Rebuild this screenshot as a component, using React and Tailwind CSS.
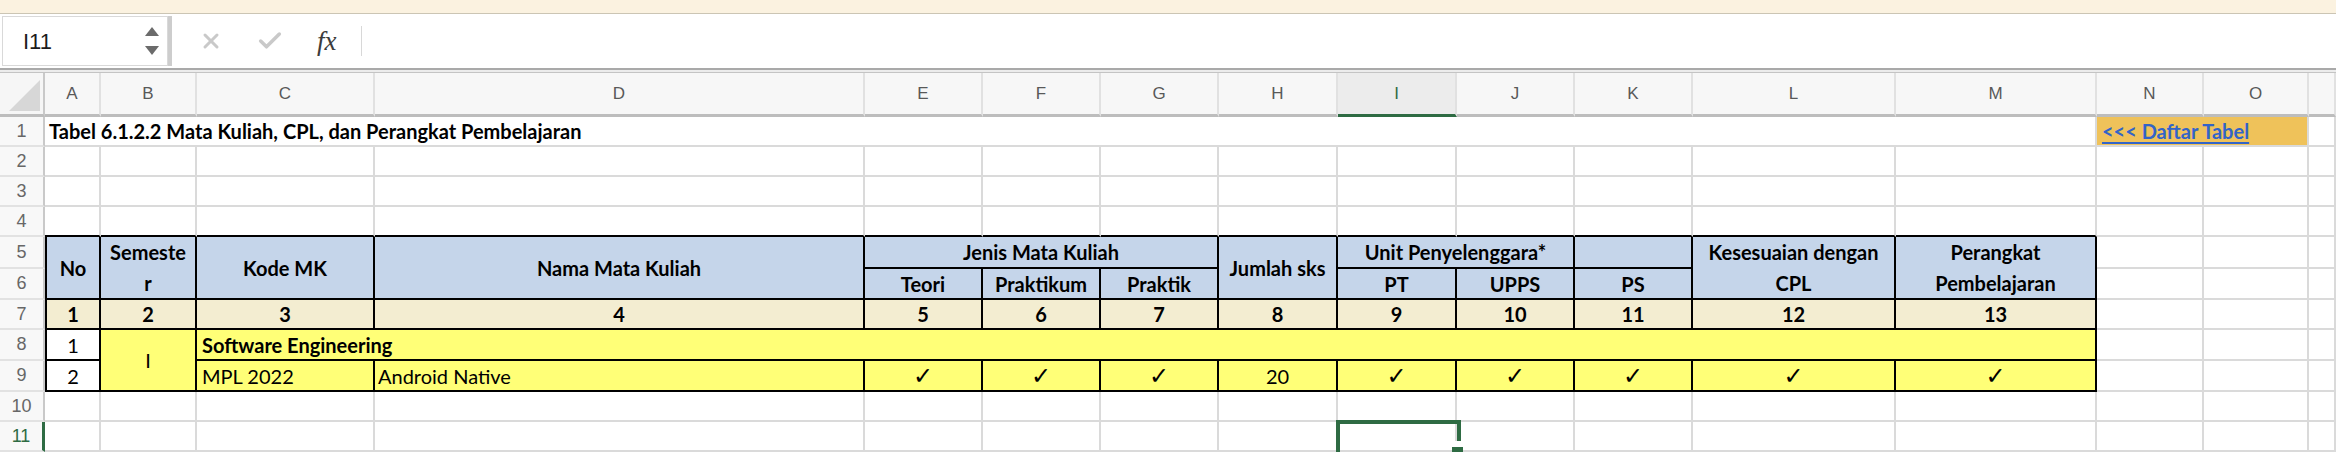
import React from "react";
import { X, Check } from "lucide-react";

const LATO = "font-['Lato','Open_Sans',sans-serif]";
const UI = "font-['Liberation_Sans','Inter',sans-serif]";
const base = "box-border border-r-2 border-b-2 flex items-center whitespace-nowrap text-[20px] text-black min-w-0";
const GRID = "border-r-[#dadada] border-b-[#dadada]";
const GRIDTOPTBL = "border-r-[#dadada] border-b-black";
const TBL = "border-r-black border-b-black";
const HEAD = `${base} ${TBL} ${LATO} bg-[#c5d5ea] justify-center font-bold`;
const NUM = `${base} ${TBL} ${LATO} bg-[#f3edd1] justify-center font-bold`;
const YEL = `${base} ${TBL} ${LATO} bg-[#ffff77]`;
const LEFT = "border-l-2 border-l-black";

function RH({ n, active }) {
  return (
    <div
      className={`box-border border-b-2 border-b-[#e2e2e2] bg-[#f8f8f8] flex items-center justify-center text-[18px] ${UI} ${
        active ? "border-r-[3px] border-r-[#2e6b43] text-[#2e6b43]" : "border-r-2 border-r-[#c9c9c9] text-[#676767]"
      }`}
    >
      {n}
    </div>
  );
}

function Blank({ cls = GRID }) {
  return <div className={`${base} ${cls}`} />;
}

function blanks(n, prefix, cls = GRID) {
  return Array.from({ length: n }, (_, i) => <Blank key={prefix + i} cls={cls} />);
}

function Two({ a, b }) {
  return (
    <>
      <span className="h-[31px] flex items-center">{a}</span>
      <span className="h-[31px] flex items-center">{b}</span>
    </>
  );
}

const Tick = () => <span className="font-['DejaVu_Sans',sans-serif] text-[24px] leading-none">✓</span>;

const COLS = ["A", "B", "C", "D", "E", "F", "G", "H", "I", "J", "K", "L", "M", "N", "O", ""];

export default function App() {
  return (
    <div className="w-[2336px] h-[452px] overflow-hidden bg-white">
      {/* top band */}
      <div className="h-[14px] bg-[#fbf2e0] border-b border-b-[#cbc5b4] box-border" />
      {/* formula bar */}
      <div className="h-[54px] flex items-stretch bg-white">
        <div className="ml-[2px] my-[2px] w-[166px] box-border border border-[#d9d9d9] flex items-center justify-between pl-[20px] pr-[8px]">
          <span className={`text-[22px] text-[#1c1c1c] ${UI}`}>I11</span>
          <div className="flex flex-col items-center gap-[10px]">
            <svg width="14" height="9" viewBox="0 0 14 9"><polygon points="7,0 14,9 0,9" fill="#6b6b6b" /></svg>
            <svg width="14" height="9" viewBox="0 0 14 9"><polygon points="0,0 14,0 7,9" fill="#6b6b6b" /></svg>
          </div>
        </div>
        <div className="w-[4px] my-[2px] bg-[#cdcdcd]" />
        <div className="flex items-center">
          <X className="ml-[27px] w-[24px] h-[24px] text-[#c9c9c9]" strokeWidth={3} />
          <Check className="ml-[33px] w-[28px] h-[28px] text-[#c9c9c9]" strokeWidth={3} />
          <span className="ml-[33px] w-[28px] text-[27px] italic text-[#3c3c3c] font-['Liberation_Serif',serif] leading-none">fx</span>
          <div className="ml-[16px] w-px h-[30px] bg-[#d8d8d8]" />
        </div>
      </div>
      <div className="h-[2px] bg-[#a9a9a9]" />
      <div className="h-[2px] bg-[#ececec]" />
      <div className="h-px bg-[#c4c4c4]" />

      {/* sheet grid */}
      <div className="grid grid-cols-[45px_56px_96px_178px_490px_118px_118px_118px_119px_119px_118px_118px_203px_201px_107px_105px_27px] grid-rows-[44px_30px_30px_30px_30px_32px_31px_30px_31px_31px_30px_30px]">
        {/* column header row */}
        <div className="box-border bg-[#f6f6f6] border-r-2 border-r-[#c9c9c9] border-b-[3px] border-b-[#bdbdbd] flex items-end justify-end pr-[3px] pb-[3px]">
          <svg width="31" height="31" viewBox="0 0 31 31"><polygon points="0,31 31,0 31,31" fill="#d7d7d7" /></svg>
        </div>
        {COLS.map((c) => (
          <div
            key={"h" + c}
            className={`box-border border-r-2 border-r-[#e1e1e1] border-b-[3px] flex items-center justify-center text-[17px] ${UI} ${
              c === "I" ? "bg-[#ececec] border-b-[#2e6b43] text-[#2e6b43]" : "bg-[#f7f7f7] border-b-[#bdbdbd] text-[#595959]"
            }`}
          >
            {c}
          </div>
        ))}

        {/* row 1 */}
        <RH n={1} />
        <div className={`${base} ${GRID} ${LATO} col-span-13 font-bold pl-[4px]`}>
          Tabel 6.1.2.2 Mata Kuliah, CPL, dan Perangkat Pembelajaran
        </div>
        <div className={`${base} ${GRID} ${LATO} col-span-2 bg-[#efc25a] pl-[5px]`}>
          <span className="font-bold text-[#3264c8] underline underline-offset-[3px] decoration-2">&lt;&lt;&lt; Daftar Tabel</span>
        </div>
        <Blank />

        {/* rows 2-3 */}
        <RH n={2} />
        {blanks(16, "r2")}
        <RH n={3} />
        {blanks(16, "r3")}

        {/* row 4 */}
        <RH n={4} />
        {blanks(13, "r4t", GRIDTOPTBL)}
        {blanks(3, "r4")}

        {/* row 5 */}
        <RH n={5} />
        <div className={`${HEAD} ${LEFT} row-span-2`}>No</div>
        <div className={`${HEAD} row-span-2 flex-col`}>
          <Two a="Semeste" b="r" />
        </div>
        <div className={`${HEAD} row-span-2`}>Kode MK</div>
        <div className={`${HEAD} row-span-2`}>Nama Mata Kuliah</div>
        <div className={`${HEAD} col-span-3`}>Jenis Mata Kuliah</div>
        <div className={`${HEAD} row-span-2`}>Jumlah sks</div>
        <div className={`${HEAD} col-span-2`}>Unit Penyelenggara*</div>
        <div className={HEAD} />
        <div className={`${HEAD} row-span-2 flex-col`}>
          <Two a="Kesesuaian dengan" b="CPL" />
        </div>
        <div className={`${HEAD} row-span-2 flex-col`}>
          <Two a="Perangkat" b="Pembelajaran" />
        </div>
        {blanks(3, "r5")}

        {/* row 6 */}
        <RH n={6} />
        <div className={HEAD}>Teori</div>
        <div className={HEAD}>Praktikum</div>
        <div className={HEAD}>Praktik</div>
        <div className={HEAD}>PT</div>
        <div className={HEAD}>UPPS</div>
        <div className={HEAD}>PS</div>
        {blanks(3, "r6")}

        {/* row 7 */}
        <RH n={7} />
        {Array.from({ length: 13 }, (_, i) => (
          <div key={"n" + i} className={`${NUM} ${i === 0 ? LEFT : ""}`}>
            {i + 1}
          </div>
        ))}
        {blanks(3, "r7")}

        {/* row 8 */}
        <RH n={8} />
        <div className={`${base} ${TBL} ${LATO} ${LEFT} bg-white justify-center`}>1</div>
        <div className={`${YEL} row-span-2 justify-center`}>I</div>
        <div className={`${YEL} col-span-11 font-bold pl-[5px]`}>Software Engineering</div>
        {blanks(3, "r8")}

        {/* row 9 */}
        <RH n={9} />
        <div className={`${base} ${TBL} ${LATO} ${LEFT} bg-white justify-center`}>2</div>
        <div className={`${YEL} pl-[5px]`}>MPL 2022</div>
        <div className={`${YEL} pl-[3px]`}>Android Native</div>
        <div className={`${YEL} justify-center`}><Tick /></div>
        <div className={`${YEL} justify-center`}><Tick /></div>
        <div className={`${YEL} justify-center`}><Tick /></div>
        <div className={`${YEL} justify-center`}>20</div>
        <div className={`${YEL} justify-center`}><Tick /></div>
        <div className={`${YEL} justify-center`}><Tick /></div>
        <div className={`${YEL} justify-center`}><Tick /></div>
        <div className={`${YEL} justify-center`}><Tick /></div>
        <div className={`${YEL} justify-center`}><Tick /></div>
        {blanks(3, "r9")}

        {/* row 10 */}
        <RH n={10} />
        {blanks(16, "r10")}

        {/* row 11 */}
        <RH n={11} active />
        {blanks(8, "r11a")}
        <div className={`${base} ${GRID} relative`}>
          <div className="absolute -left-[2px] -top-[2px] w-[125px] h-[40px] box-border border-[4px] border-[#2e6b43]" />
          <div className="absolute left-[114px] top-[19px] w-[12px] h-[6px] bg-white" />
          <div className="absolute left-[114px] top-[25px] w-[11px] h-[10px] bg-[#2e6b43]" />
        </div>
        {blanks(7, "r11b")}
      </div>
    </div>
  );
}
